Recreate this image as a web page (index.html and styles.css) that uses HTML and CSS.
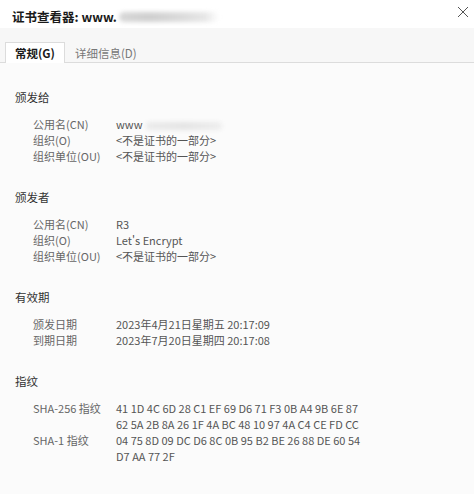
FILE: index.html
```html
<!DOCTYPE html>
<html lang="zh-CN">
<head>
<meta charset="utf-8">
<link rel="stylesheet" href="styles.css">
</head>
<body>
<div class="window">
  <div class="titlebar">
    <span class="title">证书查看器: www.</span><span class="blur blur-title"></span>
    <span class="close"><svg width="12" height="12" viewBox="0 0 12 12"><path d="M1 1 L11 11 M11 1 L1 11" stroke="#555" stroke-width="1" fill="none"/></svg></span>
  </div>
  <div class="tabbar">
    <div class="tab active">常规(G)</div>
    <div class="tab">详细信息(D)</div>
  </div>
  <div class="content">
    <section class="section">
      <h2 class="heading">颁发给</h2>
      <div class="rows">
        <div class="label">公用名(CN)</div><div class="value">www<span class="blur blur-cn"></span></div>
        <div class="label">组织(O)</div><div class="value">&lt;不是证书的一部分&gt;</div>
        <div class="label">组织单位(OU)</div><div class="value">&lt;不是证书的一部分&gt;</div>
      </div>
    </section>
    <section class="section">
      <h2 class="heading">颁发者</h2>
      <div class="rows">
        <div class="label">公用名(CN)</div><div class="value">R3</div>
        <div class="label">组织(O)</div><div class="value">Let's Encrypt</div>
        <div class="label">组织单位(OU)</div><div class="value">&lt;不是证书的一部分&gt;</div>
      </div>
    </section>
    <section class="section">
      <h2 class="heading">有效期</h2>
      <div class="rows">
        <div class="label">颁发日期</div><div class="value">2023年4月21日星期五 20:17:09</div>
        <div class="label">到期日期</div><div class="value">2023年7月20日星期四 20:17:08</div>
      </div>
    </section>
    <section class="section">
      <h2 class="heading">指纹</h2>
      <div class="rows">
        <div class="label">SHA-256 指纹</div><div class="value">41 1D 4C 6D 28 C1 EF 69 D6 71 F3 0B A4 9B 6E 87<br>62 5A 2B 8A 26 1F 4A BC 48 10 97 4A C4 CE FD CC</div>
        <div class="label">SHA-1 指纹</div><div class="value">04 75 8D 09 DC D6 8C 0B 95 B2 BE 26 88 DE 60 54<br>D7 AA 77 2F</div>
      </div>
    </section>
  </div>
</div>
</body>
</html>
```
FILE: styles.css
```css
html, body {
  margin: 0;
  padding: 0;
}
body {
  width: 474px;
  height: 494px;
  background: #fbfbfb;
  font-family: "Noto Sans CJK SC", sans-serif;
  font-size: 11px;
  overflow: hidden;
}
.window {
  display: flex;
  flex-direction: column;
}
.titlebar {
  height: 28px;
  background: #ffffff;
  display: flex;
  align-items: flex-end;
  padding-left: 12px;
  position: relative;
}
.title {
  font-weight: bold;
  font-size: 12.5px;
  line-height: 18px;
  color: #1a1a1a;
  padding-bottom: 2px;
}
.blur {
  display: inline-block;
  background: linear-gradient(90deg, #d8d8d8 0%, #cfcfcf 30%, #dadada 60%, #e6e6e6 85%, rgba(240,240,240,0) 100%);
  filter: blur(2px);
  border-radius: 6px;
}
.blur-title {
  width: 100px;
  height: 10px;
  margin-left: 2px;
  margin-bottom: 6px;
}
.blur-cn {
  width: 76px;
  height: 8px;
  margin-left: 4px;
  vertical-align: middle;
  background: linear-gradient(90deg, #ebebeb, #e4e4e4 50%, #eeeeee);
}
.close {
  position: absolute;
  right: 5px;
  top: 6px;
  width: 12px;
  height: 12px;
}
.close svg { display: block; }
.tabbar {
  height: 34px;
  background: #f7f7f7;
  border-bottom: 1px solid #dcdcdc;
  display: flex;
  align-items: flex-end;
  padding-left: 5px;
}
.tab {
  height: 20px;
  line-height: 20px;
  padding: 0 9px;
  color: #777;
  font-size: 11.5px;
  margin-bottom: -1px;
  border: 1px solid transparent;
  border-bottom: none;
}
.tab.active {
  background: #ffffff;
  border-color: #dcdcdc;
  color: #1a1a1a;
  font-weight: bold;
}
.content {
  padding: 26px 0 0 15px;
}
.section {
  margin: 0 0 25px 0;
}
.heading {
  margin: 0 0 11px 0;
  font-size: 11.5px;
  font-weight: normal;
  line-height: 16px;
  color: #333;
}
.rows {
  display: grid;
  grid-template-columns: 83px 1fr;
  padding-left: 18px;
  line-height: 16px;
}
.label {
  color: #666;
}
.value {
  color: #555;
}
```
